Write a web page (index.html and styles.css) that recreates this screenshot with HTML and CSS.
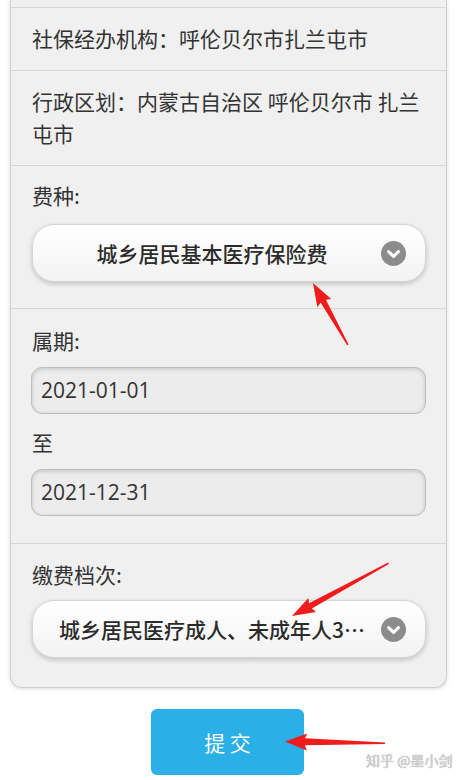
FILE: index.html
```html
<!DOCTYPE html>
<html lang="zh-CN">
<head>
<meta charset="utf-8">
<title>缴费</title>
<link rel="stylesheet" href="styles.css">
</head>
<body>
<div class="page">
  <div class="card">
    <div class="stub"></div>
    <div class="row">社保经办机构：呼伦贝尔市扎兰屯市</div>
    <div class="row">行政区划：内蒙古自治区 呼伦贝尔市 扎兰屯市</div>
    <div class="section s1">
      <div class="label">费种:</div>
      <div class="select">
        <span class="select-text">城乡居民基本医疗保险费</span>
        <span class="select-icon">
          <svg width="25" height="25" viewBox="0 0 25 25"><circle cx="12.5" cy="12.5" r="12.5" fill="#8c8c8c"/><path d="M7.6 10.6 L12.5 15.3 L17.4 10.6" fill="none" stroke="#fff" stroke-width="3.2" stroke-linecap="round" stroke-linejoin="round"/></svg>
        </span>
      </div>
    </div>
    <div class="section s2">
      <div class="label">属期:</div>
      <div class="input">2021-01-01</div>
      <div class="label mid">至</div>
      <div class="input">2021-12-31</div>
    </div>
    <div class="section s3">
      <div class="label">缴费档次:</div>
      <div class="select">
        <span class="select-text">城乡居民医疗成人、未成年人3…</span>
        <span class="select-icon">
          <svg width="25" height="25" viewBox="0 0 25 25"><circle cx="12.5" cy="12.5" r="12.5" fill="#8c8c8c"/><path d="M7.6 10.6 L12.5 15.3 L17.4 10.6" fill="none" stroke="#fff" stroke-width="3.2" stroke-linecap="round" stroke-linejoin="round"/></svg>
        </span>
      </div>
    </div>
  </div>
  <div class="actions">
    <button class="submit" type="button">提 交</button>
  </div>

  <svg class="marks" width="462" height="780" viewBox="0 0 462 780">
    <g fill="#f01c1c">
      <polygon transform="translate(313 283) rotate(-119.4)" points="-71,-0.8 -21,-3 -23,-8 0,0 -23,8 -21,3 -71,0.8"/>
      <polygon transform="translate(292 616) rotate(151.35)" points="-110,-0.8 -21,-3 -23,-8 0,0 -23,8 -21,3 -110,0.8"/>
      <polygon transform="translate(285 741.5) rotate(181)" points="-100,-0.8 -20,-3.5 -22,-8.5 0,0 -22,8.5 -20,3.5 -100,0.8"/>
    </g>
  </svg>
  <div class="watermark">知乎 @墨小剑</div>
</div>
</body>
</html>
```

FILE: styles.css
```css
html, body {
  margin: 0;
  padding: 0;
  background: #ffffff;
}

body {
  font-family: "Noto Sans CJK SC", "Noto Sans", sans-serif;
  color: #333333;
  width: 462px;
  height: 780px;
  overflow: hidden;
}

.page {
  position: relative;
  width: 462px;
  height: 780px;
  padding: 0 15px 0 10px;
  box-sizing: border-box;
}

.card {
  background: #f0f0f0;
  border: 1px solid #cfcfcf;
  border-top: none;
  border-radius: 0 0 12px 12px;
  box-shadow: 0 1px 4px rgba(0, 0, 0, 0.14);
}

.stub {
  height: 7px;
}

.row {
  border-top: 1px solid #d6d6d6;
  padding: 14px 12px 16px 21px;
  font-size: 21px;
  line-height: 32px;
}

.section {
  border-top: 1px solid #d6d6d6;
  padding: 0 20px 0 20px;
}

.s1 { padding-top: 13px; padding-bottom: 26px; }
.s2 { padding-top: 15px; padding-bottom: 27px; }
.s3 { padding-top: 14px; padding-bottom: 29px; }

.label {
  font-size: 21px;
  line-height: 32px;
  padding-left: 1px;
  margin-bottom: 13px;
}

.s2 .label { margin-bottom: 11px; }
.s3 .label { margin-bottom: 10px; }

.label.mid {
  margin-top: 12px;
}

.select {
  display: flex;
  align-items: center;
  height: 58px;
  box-sizing: border-box;
  border: 1px solid #d4d4d4;
  border-radius: 22px;
  background: linear-gradient(#ffffff, #f3f3f3);
  box-shadow: 0 2px 5px rgba(0, 0, 0, 0.2);
  padding: 0 19px 0 24px;
  margin-left: 1px;
}

.select-text {
  flex: 1;
  min-width: 0;
  text-align: center;
  font-size: 21px;
  font-weight: 500;
  color: #2b2b2b;
  white-space: nowrap;
  overflow: hidden;
}

.select-icon {
  width: 25px;
  height: 25px;
  margin-left: 14px;
  display: flex;
}

.input {
  height: 47px;
  box-sizing: border-box;
  border: 1px solid #bdbdbd;
  border-radius: 11px;
  background: #ececec;
  box-shadow: inset 0 1px 4px rgba(0, 0, 0, 0.18);
  padding-left: 9px;
  font-family: "Open Sans", "Noto Sans CJK SC", sans-serif;
  font-size: 21px;
  line-height: 45px;
  color: #333333;
}

.actions {
  display: flex;
  justify-content: center;
  padding-top: 21px;
  padding-right: 6px;
}

.submit {
  width: 153px;
  height: 66px;
  border: none;
  border-radius: 6px;
  background: #2aafe6;
  color: #ffffff;
  font-family: "Noto Sans CJK SC", sans-serif;
  font-size: 21px;
  padding: 0;
  margin-left: 4px;
}

.marks {
  position: absolute;
  left: 0;
  top: 0;
  pointer-events: none;
}

.watermark {
  position: absolute;
  left: 366px;
  top: 750px;
  font-size: 14px;
  line-height: 20px;
  color: #d2d2d2;
  text-shadow: 0 0 1px #999;
  white-space: nowrap;
}
```
